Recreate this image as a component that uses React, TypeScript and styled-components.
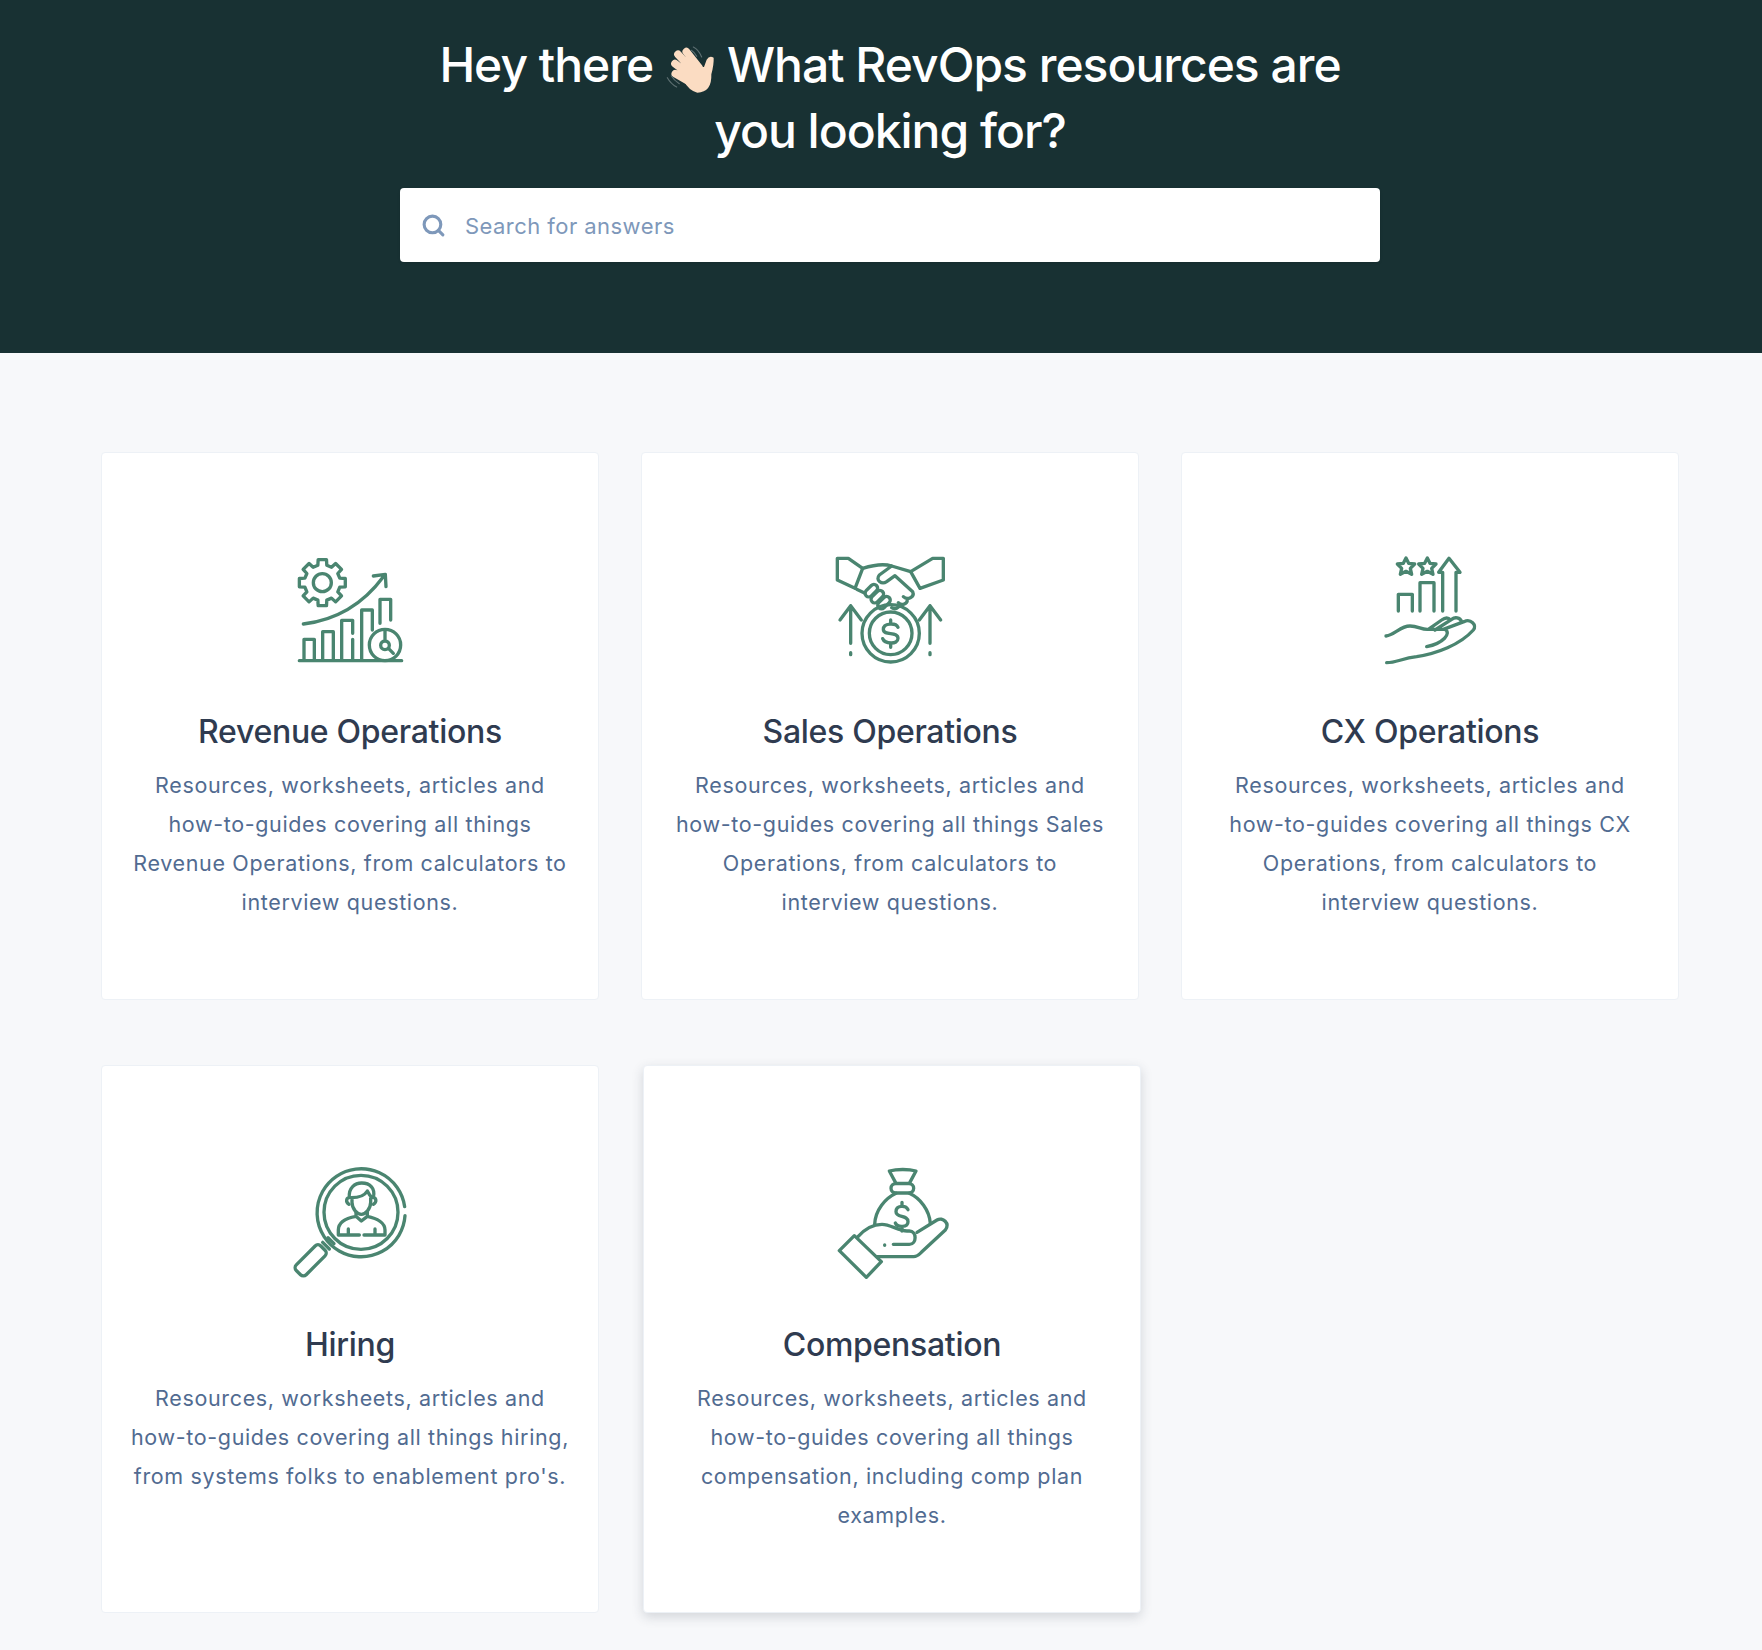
import styled, { createGlobalStyle } from "styled-components";
import { Search } from "lucide-react";

const GlobalStyle = createGlobalStyle`
  html, body {
    margin: 0;
    padding: 0;
    background: #f7f8fa;
  }
  body {
    font-family: "Inter", "Open Sans", sans-serif;
  }
`;

const Hero = styled.header`
  height: 353px;
  box-sizing: border-box;
  background: #183133;
  padding: 32px 0 0 18px;
  display: flex;
  flex-direction: column;
  align-items: center;
`;

const Title = styled.h1`
  margin: 0 0 24px;
  color: #ffffff;
  font-size: 48px;
  font-weight: 500;
  line-height: 66px;
  letter-spacing: -1px;
  text-align: center;
`;

const Wave = styled.svg`
  width: 75px;
  height: 65px;
  margin: -10px -2px -10px -11px;
  vertical-align: -10px;
`;

const SearchBox = styled.div`
  width: 980px;
  height: 74px;
  box-sizing: border-box;
  padding: 0 21px;
  display: flex;
  align-items: center;
  gap: 19px;
  background: #ffffff;
  border-radius: 4px;
  box-shadow: 0 1px 3px rgba(0, 0, 0, 0.12);
  color: #7e98ba;
`;

const Placeholder = styled.span`
  font-size: 22px;
  letter-spacing: 0.45px;
  padding-top: 2px;
`;

const Grid = styled.main`
  display: grid;
  grid-template-columns: repeat(3, 498px);
  gap: 65px 42px;
  padding: 99px 0 37px 101px;
`;

const Card = styled.article<{ $raised?: boolean }>`
  height: 548px;
  box-sizing: border-box;
  padding-top: 87px;
  display: flex;
  flex-direction: column;
  align-items: center;
  background: #ffffff;
  border: 1px solid #edf1f6;
  border-radius: 4px;
  ${(p) =>
    p.$raised &&
    `
    transform: translateX(2px);
    box-shadow: 0 4px 12px rgba(45, 55, 72, 0.18);
  `}
`;

const Icon = styled.svg`
  width: 140px;
  height: 130px;
  display: block;
  fill: none;
  stroke: #4a8570;
  stroke-width: 10;
  stroke-linecap: round;
  stroke-linejoin: round;
`;

const CardTitle = styled.h2`
  margin: 41px 0 13px;
  color: #2f3b50;
  font-size: 32px;
  font-weight: 500;
  line-height: 42px;
  letter-spacing: -0.3px;
  white-space: nowrap;
`;

const Line = styled.p`
  margin: 0;
  color: #516b91;
  font-size: 21.5px;
  line-height: 39px;
  letter-spacing: 0.65px;
  white-space: nowrap;
  text-align: center;
`;

const gearPath = (cx: number, cy: number) => {
  const pts: string[] = [];
  for (let i = 0; i < 8; i++) {
    const a = (i * Math.PI) / 4;
    const p = (r: number, d: number) =>
      `${(cx + r * Math.sin(a + d)).toFixed(1)} ${(cy - r * Math.cos(a + d)).toFixed(1)}`;
    pts.push(`${i === 0 ? "M" : "L"}${p(54, -0.25)}`, `L${p(70, -0.18)}`, `L${p(70, 0.18)}`, `L${p(54, 0.25)}`);
  }
  return pts.join(" ") + " Z";
};

const GrowthIcon = () => (
  <Icon viewBox="0 0 420 390">
    <path d={gearPath(127, 128)} />
    <circle cx="127" cy="128" r="27" />
    <path d="M70 252C150 242 240 205 310 110M280 108L316 103L318 140" />
    <path d="M58 362H365M72 362V298H103V362M128 362V275H160V362M185 362V241H218V280M218 298V362M245 362V210H277V270M300 250V178H332V240" />
    <circle cx="315" cy="315" r="47" />
    <circle cx="315" cy="316" r="13" />
    <path d="M315 270V298M326 326L340 340" />
  </Icon>
);

const HandshakeIcon = () => (
  <Icon viewBox="0 0 420 390">
    <path d="M52 55H85L128 85L105 145L52 120ZM370 55H338L272 95L300 145L370 120Z" />
    <path d="M128 85C160 75 190 70 215 78L178 105C165 120 185 135 200 125L225 107L278 155C285 172 262 182 250 170M262 180C262 192 245 198 235 188M240 195C235 205 225 210 215 203" />
    <path d="M215 78L272 95M110 148L135 160" />
    <rect x="-22" y="-11" width="44" height="22" rx="11" transform="translate(154 152) rotate(-45)" />
    <rect x="-22" y="-11" width="44" height="22" rx="11" transform="translate(172 170) rotate(-45)" />
    <rect x="-22" y="-11" width="44" height="22" rx="11" transform="translate(192 188) rotate(-45)" />
    <path d="M92 310V197M60 240L92 197L124 240M92 338V344M330 310V197M298 240L330 197L362 240M330 338V344" />
    <circle cx="212" cy="280" r="86" />
    <circle cx="212" cy="280" r="64" />
    <path d="M234 262C228 248 190 248 190 268C190 290 234 272 234 295C234 315 194 312 188 296M212 240V250M212 310V322" />
  </Icon>
);

const CareIcon = () => (
  <Icon viewBox="0 0 420 390">
    <path d="M138 54L146 70L164 72L151 85L155 103L138 94L121 103L125 85L112 72L130 70ZM202 54L210 70L228 72L215 85L219 103L202 94L185 103L189 85L176 72L194 70Z" />
    <path d="M115 213V163H157V213M180 213V128H222V213M248 213V97H236L267 55L300 97H288V213" />
    <path d="M78 288C105 285 120 258 150 258C175 258 185 270 205 268L245 240C255 232 265 232 272 240M225 270L275 238C285 230 300 232 305 245M250 268L312 245C332 235 352 255 340 270C300 315 230 340 170 350C125 355 110 368 80 368M205 268H255C275 280 250 310 200 320" />
  </Icon>
);

const HiringIcon = () => (
  <Icon viewBox="0 -6 420 390">
    <path d="M374 155A132 132 0 1 0 375 182" />
    <circle cx="243" cy="172" r="111" />
    <path d="M207 148C195 140 200 128 208 128C205 98 225 84 245 84C270 84 287 100 280 128C288 128 292 140 280 148" />
    <path d="M214 128C240 128 255 120 262 108C266 116 270 122 276 128M216 130V142C216 162 232 178 244 178C256 178 272 162 272 142V130" />
    <path d="M228 172V184L244 198L262 184V172M228 184C195 190 175 204 175 225V240H238M262 184C292 190 315 204 315 225V240H252M205 222V240M285 222V240" />
    <rect x="-52" y="-21" width="104" height="42" rx="12" transform="translate(92 316) rotate(-45)" />
    <path d="M128 262L148 282M144 248L162 266" />
  </Icon>
);

const MoneyIcon = () => (
  <Icon viewBox="0 -6 420 390">
    <path d="M202 48C225 42 260 42 282 48L262 85H222Z" />
    <rect x="207" y="86" width="68" height="28" rx="14" />
    <path d="M222 115C190 130 160 165 158 208M262 115C295 130 322 165 325 205" />
    <path d="M258 164C252 150 222 150 222 170C222 190 258 178 258 200C258 218 226 218 220 204M240 142V152M240 218V228" />
    <path d="M108 245C130 220 150 208 180 208C205 208 230 228 255 228H262C285 228 285 268 262 268H214M188 270V271" />
    <path d="M165 305H275C285 305 292 298 298 292L370 225C385 205 362 185 345 195L285 232" />
    <path d="M52 287L97 242L178 320L133 367Z" />
  </Icon>
);

const cards = [
  {
    title: "Revenue Operations",
    icon: <GrowthIcon />,
    lines: [
      "Resources, worksheets, articles and",
      "how-to-guides covering all things",
      "Revenue Operations, from calculators to",
      "interview questions.",
    ],
  },
  {
    title: "Sales Operations",
    icon: <HandshakeIcon />,
    lines: [
      "Resources, worksheets, articles and",
      "how-to-guides covering all things Sales",
      "Operations, from calculators to",
      "interview questions.",
    ],
  },
  {
    title: "CX Operations",
    icon: <CareIcon />,
    lines: [
      "Resources, worksheets, articles and",
      "how-to-guides covering all things CX",
      "Operations, from calculators to",
      "interview questions.",
    ],
  },
  {
    title: "Hiring",
    icon: <HiringIcon />,
    lines: [
      "Resources, worksheets, articles and",
      "how-to-guides covering all things hiring,",
      "from systems folks to enablement pro's.",
    ],
  },
  {
    title: "Compensation",
    icon: <MoneyIcon />,
    raised: true,
    lines: [
      "Resources, worksheets, articles and",
      "how-to-guides covering all things",
      "compensation, including comp plan",
      "examples.",
    ],
  },
];

function App() {
  return (
    <>
      <GlobalStyle />
      <Hero>
        <Title>
          Hey there{" "}
          <Wave viewBox="0 0 225 195">
            <g fill="none" strokeLinecap="round">
              <path d="M97 44L135 92M72 52L118 102M63 80L108 114M64 110L102 132" stroke="#fbdcc2" strokeWidth="23" />
              <path d="M118 30Q134 38 143 60M112 40Q122 46 128 58M40 122Q50 140 68 150M52 116Q60 130 76 140" stroke="#5d6f71" strokeWidth="3.5" />
            </g>
            <path
              d="M85 108Q100 85 150 90L158 68Q166 54 179 62Q180 82 172 112Q174 166 130 167Q105 162 88 130Z"
              fill="#fbdcc2"
            />
          </Wave>
          What RevOps resources are
          <br />
          you looking for?
        </Title>
        <SearchBox>
          <Search size={25} strokeWidth={3} />
          <Placeholder>Search for answers</Placeholder>
        </SearchBox>
      </Hero>
      <Grid>
        {cards.map((card) => (
          <Card key={card.title} $raised={card.raised}>
            {card.icon}
            <CardTitle>{card.title}</CardTitle>
            {card.lines.map((line) => (
              <Line key={line}>{line}</Line>
            ))}
          </Card>
        ))}
      </Grid>
    </>
  );
}

export default App;
